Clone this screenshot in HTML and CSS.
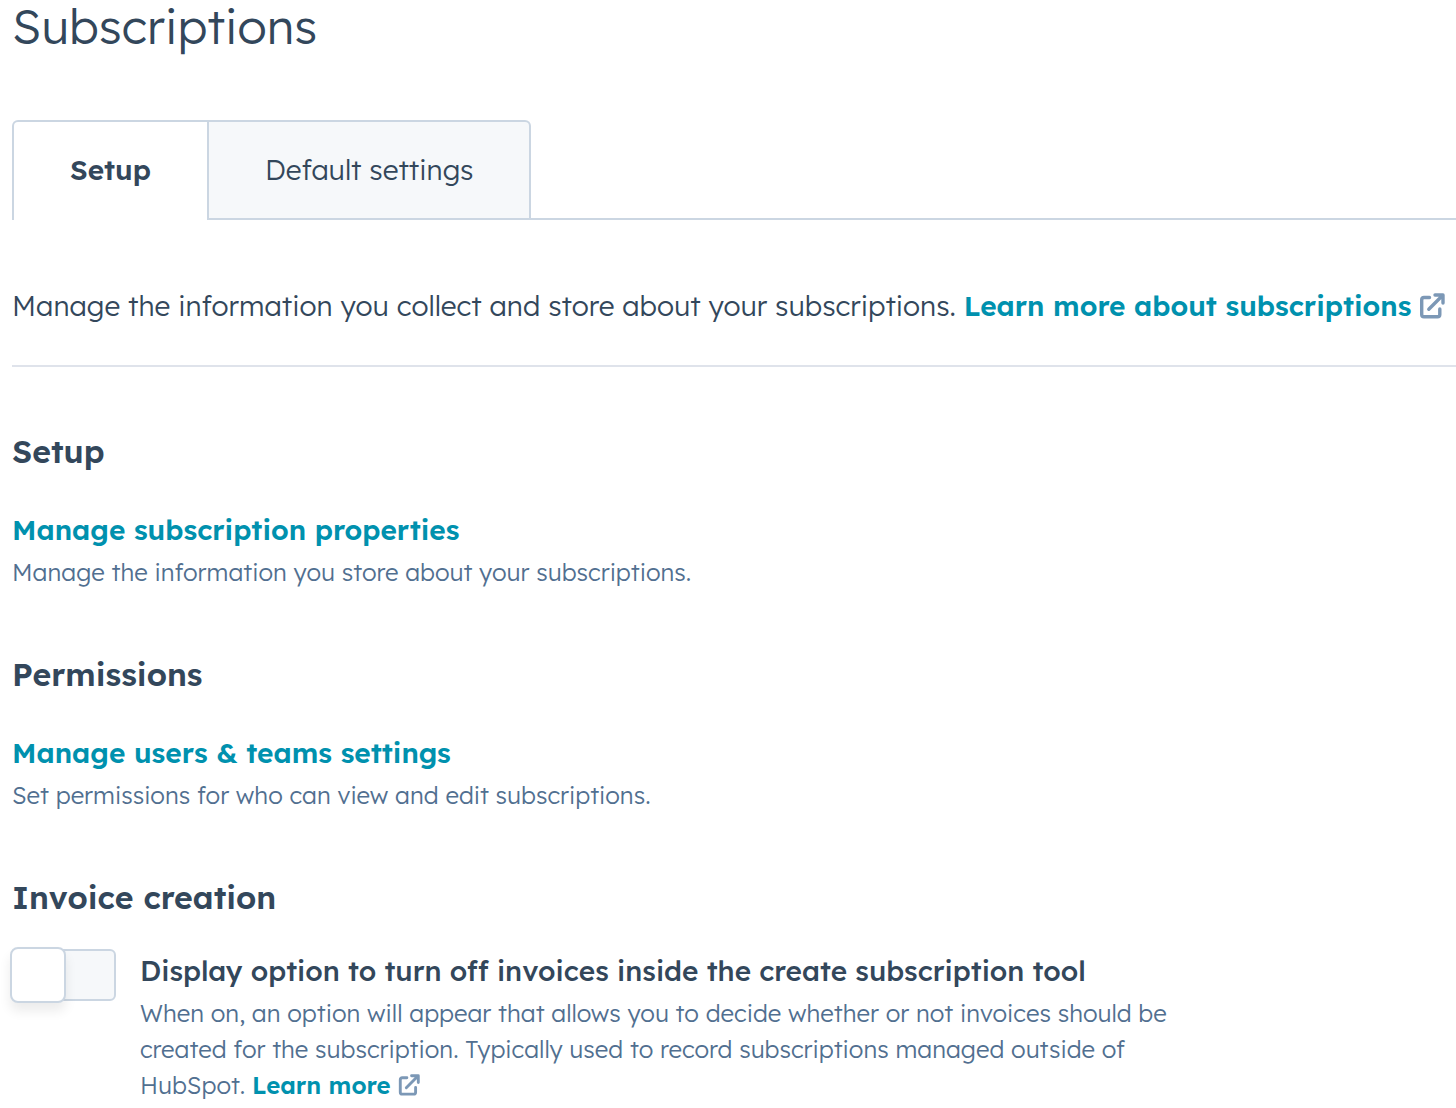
FILE: index.html
```html
<!DOCTYPE html>
<html lang="en">
<head>
  <meta charset="utf-8">
  <meta name="viewport" content="width=device-width, initial-scale=1">
  <title>Subscriptions</title>
  <link rel="stylesheet" href="styles.css">
</head>
<body>
  <svg class="sprite" aria-hidden="true">
    <symbol id="external" viewBox="0 0 26 26">
      <path d="M10.500 4.500H5Q2.700 4.500 2.700 6.800V21.500Q2.700 23.800 5 23.800H18.500Q20.800 23.800 20.800 21.500V16" fill="none" stroke="currentColor" stroke-width="3.400" stroke-linecap="round" stroke-linejoin="round"/>
      <path d="M9.800 16.200L23 3M16 2H24V10" fill="none" stroke="currentColor" stroke-width="3.400" stroke-linecap="round" stroke-linejoin="round"/>
    </symbol>
  </svg>
  <main class="page">
    <h1 class="title">Subscriptions</h1>
    <div class="tabs" role="tablist">
      <button class="tab tab-active" type="button" role="tab" aria-selected="true">Setup</button>
      <button class="tab tab-default" type="button" role="tab" aria-selected="false">Default settings</button>
    </div>
    <p class="intro">Manage the information you collect and store about your subscriptions. <a class="link" href="#about">Learn more about subscriptions<svg class="icon" aria-hidden="true"><use href="#external"/></svg></a></p>
    <section class="section">
      <h2 class="heading">Setup</h2>
      <a class="link" href="#properties">Manage subscription properties</a>
      <p class="help">Manage the information you store about your subscriptions.</p>
    </section>
    <section class="section">
      <h2 class="heading">Permissions</h2>
      <a class="link" href="#users">Manage users &amp; teams settings</a>
      <p class="help">Set permissions for who can view and edit subscriptions.</p>
    </section>
    <section class="section">
      <h2 class="heading heading-tight">Invoice creation</h2>
      <div class="option">
        <input class="toggle" type="checkbox" role="switch" id="invoices" aria-describedby="invoices-help">
        <div class="option-text">
          <label class="option-label" for="invoices">Display option to turn off invoices inside the create subscription tool</label>
          <p class="help" id="invoices-help">When on, an option will appear that allows you to decide whether or not invoices should be created for the subscription. Typically used to record subscriptions managed outside of HubSpot. <a class="link" href="#learn">Learn more<svg class="icon icon-small" aria-hidden="true"><use href="#external"/></svg></a></p>
        </div>
      </div>
    </section>
  </main>
</body>
</html>
```

FILE: styles.css
```css
*, *::before { box-sizing: border-box; }
body {
  margin: 0;
  background: #fff;
  color: #33475b;
  font: 300 28px/44px "Lexend Deca", Inter, sans-serif;
}
h1, h2, p { margin: 0; }
.sprite { position: absolute; width: 0; height: 0; }
.page { padding-left: 12px; }
.title { padding-bottom: 4px; font-size: 48px; line-height: 52px; font-weight: 300; }
.tabs {
  display: flex;
  margin-top: 64px;
  box-shadow: inset 0 -2px #cbd6e2;
}
.tab {
  height: 100px;
  padding: 0 56px;
  border: 2px solid #cbd6e2;
  background: #f6f8fa;
  color: inherit;
  font: inherit;
}
.tab-active {
  padding-bottom: 2px;
  border-bottom: 0;
  border-top-left-radius: 6px;
  background: #fff;
  font-weight: 600;
}
.tab-default { border-left: 0; border-top-right-radius: 6px; }
.intro {
  padding: 64px 0 37px;
  border-bottom: 2px solid #dfe3eb;
  white-space: nowrap;
}
.section { padding-top: 62px; }
.heading { margin-bottom: 35px; font-size: 32px; line-height: 44px; font-weight: 600; }
.heading-tight { margin-bottom: 30px; }
.link { color: #0091ae; font-weight: 600; text-decoration: none; }
.help { margin-top: 2px; color: #516f90; font-size: 24px; line-height: 36px; }
.icon { width: 26px; height: 26px; margin-left: 8px; vertical-align: -3px; color: #7c98b6; }
.icon-small { width: 22px; height: 22px; margin-left: 7px; vertical-align: -2px; }
.option { display: flex; gap: 24px; }
.toggle {
  flex: none;
  position: relative;
  width: 104px;
  height: 52px;
  margin: 0;
  appearance: none;
  border: 2px solid #cbd6e2;
  border-radius: 6px;
  background: #f6f8fa;
}
.toggle::before {
  content: "";
  position: absolute;
  top: -4px;
  left: -4px;
  width: 56px;
  height: 56px;
  border: 2px solid #cbd6e2;
  border-radius: 8px;
  background: #fff;
  box-shadow: 0 8px 12px rgba(0, 0, 0, .08);
}
.toggle:checked::before { left: 48px; }
.option-text { max-width: 1040px; }
.option-label { font-weight: 500; }
```
